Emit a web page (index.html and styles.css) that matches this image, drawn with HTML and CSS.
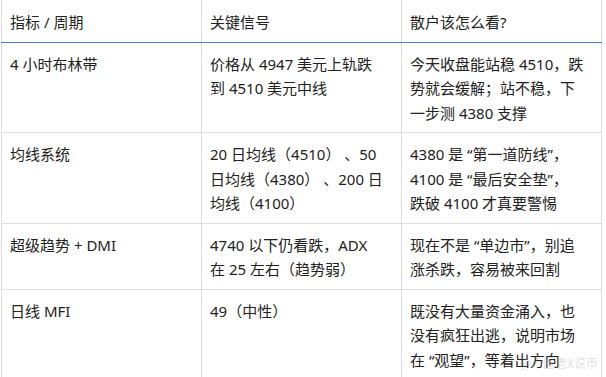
FILE: index.html
```html
<!DOCTYPE html>
<html lang="zh-CN">
<head>
<meta charset="utf-8">
<link rel="stylesheet" href="styles.css">
</head>
<body>
<div class="page">
<table class="grid">
  <colgroup>
    <col class="c1"><col class="c2"><col class="c3">
  </colgroup>
  <thead>
    <tr><th>指标 / 周期</th><th>关键信号</th><th>散户该怎么看?</th></tr>
  </thead>
  <tbody>
    <tr>
      <td>4 小时布林带</td>
      <td>价格从 4947 美元上轨跌<br>到 4510 美元中线</td>
      <td>今天收盘能站稳 4510，跌<br>势就会缓解；站不稳，下<br>一步测 4380 支撑</td>
    </tr>
    <tr>
      <td>均线系统</td>
      <td>20 日均线（4510）&nbsp;、50<br>日均线（4380）&nbsp;、200 日<br>均线（4100）</td>
      <td>4380 是 “第一道防线”，<br>4100 是 “最后安全垫”，<br>跌破 4100 才真要警惕</td>
    </tr>
    <tr>
      <td>超级趋势 + DMI</td>
      <td>4740 以下仍看跌，ADX<br>在 25 左右（趋势弱）</td>
      <td>现在不是 “单边市”，别追<br>涨杀跌，容易被来回割</td>
    </tr>
    <tr>
      <td>日线 MFI</td>
      <td>49（中性）</td>
      <td>既没有大量资金涌入，也<br>没有疯狂出逃，说明市场<br>在 “观望”，等着出方向</td>
    </tr>
  </tbody>
</table>
<div class="watermark">@币圈老X说币</div>
</div>
</body>
</html>
```

FILE: styles.css
```css
html, body {
  margin: 0;
  padding: 0;
  background: #ffffff;
  overflow: hidden;
}
.page {
  position: relative;
  width: 606px;
  height: 377px;
  overflow: hidden;
  padding-left: 1px;
  box-sizing: border-box;
}
.grid {
  border-collapse: collapse;
  table-layout: fixed;
  width: 600px;
  font-family: "Noto Sans", "Noto Sans CJK SC", sans-serif;
  font-size: 15px;
  line-height: 24.5px;
  color: #222222;
}
.c1 { width: 200px; }
.c2 { width: 200px; }
.c3 { width: 200px; }
.grid th,
.grid td {
  border: 1px solid #dedede;
  padding: 8px 4px 8px 8px;
  text-align: left;
  vertical-align: top;
  font-weight: normal;
  white-space: nowrap;
}
.grid td {
  padding-top: 9px;
  padding-bottom: 7px;
}
.grid th {
  border-top: none;
  padding-top: 10px;
  padding-bottom: 7px;
  border-bottom: 1px solid #4a7bd9;
}
.watermark {
  position: absolute;
  right: 8px;
  bottom: 6px;
  font-family: "Noto Sans CJK SC", sans-serif;
  font-size: 12px;
  color: rgba(160, 160, 160, 0.35);
}
```
